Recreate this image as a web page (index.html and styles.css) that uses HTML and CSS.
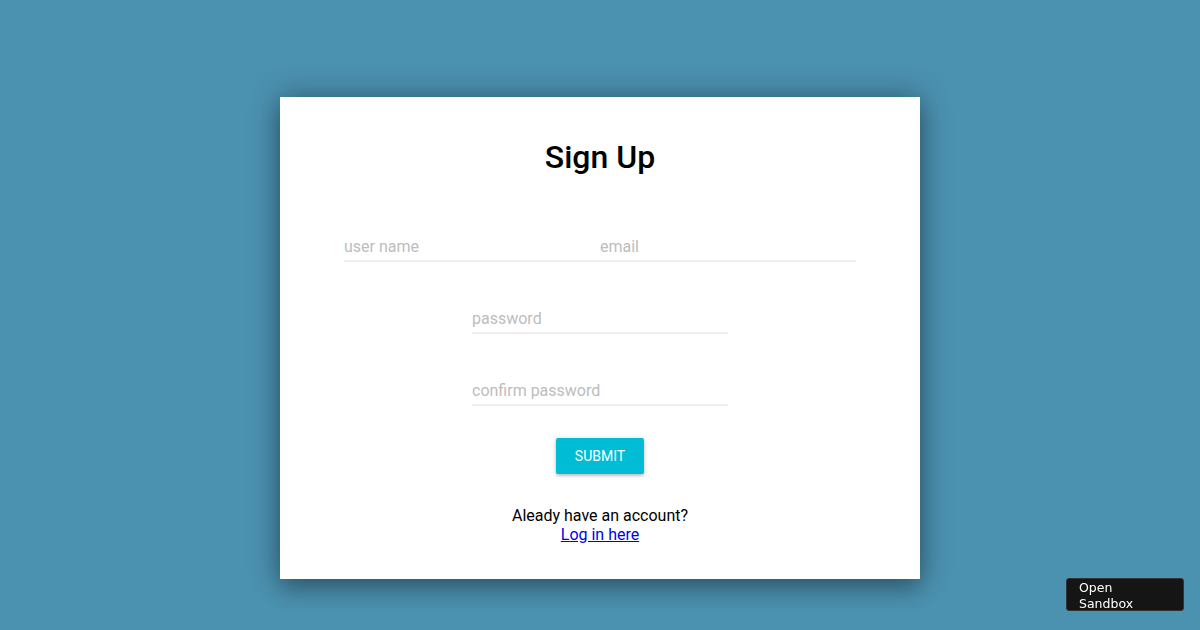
FILE: index.html
```html
<!DOCTYPE html>
<html lang="en">
<head>
<meta charset="utf-8">
<title>Sign Up</title>
<link rel="stylesheet" href="styles.css">
</head>
<body>
<main class="page">
  <section class="card">
    <h1 class="title">Sign Up</h1>
    <form class="form" onsubmit="return false">
      <div class="row row-wide">
        <input class="field" type="text" placeholder="user name">
        <input class="field" type="email" placeholder="email">
      </div>
      <div class="row">
        <input class="field" type="password" placeholder="password">
      </div>
      <div class="row">
        <input class="field" type="password" placeholder="confirm password">
      </div>
      <button class="submit" type="submit">Submit</button>
    </form>
    <p class="login">Aleady have an account?<br><a href="#" class="login-link">Log in here</a></p>
  </section>
</main>
<a class="sandbox" href="#">Open<br>Sandbox</a>
</body>
</html>
```

FILE: styles.css
```css
html, body {
  margin: 0;
  height: 100%;
}

body {
  background: #4b91b0;
  font-family: Roboto, "Liberation Sans", sans-serif;
  overflow: hidden;
}

.page {
  display: flex;
  justify-content: center;
  padding-top: 97px;
}

.card {
  width: 640px;
  box-sizing: border-box;
  padding: 40px 64px 35px;
  background: #fff;
  box-shadow: 0 0 28px rgba(0, 0, 0, 0.35), 0 12px 20px rgba(0, 0, 0, 0.2);
  display: flex;
  flex-direction: column;
  align-items: center;
}

.title {
  margin: 0;
  font-size: 32px;
  line-height: 40px;
  font-weight: 500;
  color: #000;
}

.form {
  width: 100%;
  margin-top: 55px;
  display: flex;
  flex-direction: column;
  align-items: center;
  gap: 42px;
}

.row {
  display: flex;
  width: 256px;
}

.row-wide {
  width: 100%;
}

.field {
  flex: 1;
  min-width: 0;
  height: 30px;
  box-sizing: border-box;
  margin: 0;
  padding: 0;
  border: none;
  border-bottom: 2px solid #eeeeee;
  background: transparent;
  font-family: Roboto, "Liberation Sans", sans-serif;
  font-size: 16px;
  color: #333;
  outline: none;
}

.field::placeholder {
  color: #bdbdbd;
}

.submit {
  margin-top: -10px;
  width: 88px;
  height: 36px;
  border: none;
  border-radius: 2px;
  background: #00bcd4;
  color: #fff;
  font-family: Roboto, "Liberation Sans", sans-serif;
  font-size: 14px;
  text-transform: uppercase;
  box-shadow: 0 1px 5px rgba(0, 0, 0, 0.2), 0 2px 2px rgba(0, 0, 0, 0.12);
  cursor: pointer;
}

.login {
  margin: 32px 0 0;
  font-size: 16px;
  line-height: 19px;
  text-align: center;
  color: #000;
}

.login-link {
  color: #0000ee;
}

.sandbox {
  position: fixed;
  right: 16px;
  bottom: 19px;
  width: 118px;
  height: 33px;
  box-sizing: border-box;
  padding: 1px 0 0 12px;
  background: #151515;
  border: 1px solid #333;
  border-radius: 3px;
  color: #fff;
  font-family: "DejaVu Sans", sans-serif;
  font-size: 12.5px;
  line-height: 16px;
  text-decoration: none;
}
```
